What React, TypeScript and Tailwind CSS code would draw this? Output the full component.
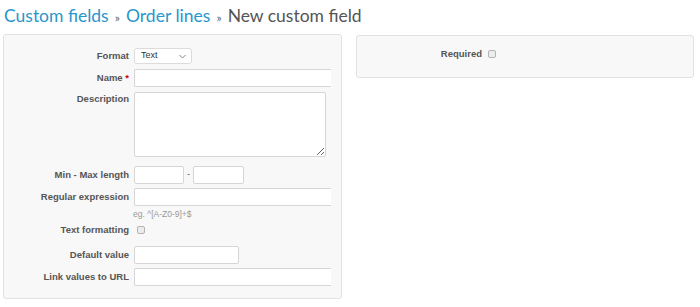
import React from "react";

const labelCls =
  "w-[130px] shrink-0 pr-[5px] text-right text-[9.5px] font-bold text-[#555]";
const inputCls =
  "h-[18px] bg-white border border-[#d6d6d6] rounded-[2px] outline-none";

const Check = () => (
  <span className="inline-block w-[8px] h-[8px] border border-[#b4b4b4] bg-[#ececec] rounded-[2px]" />
);

export default function App() {
  return (
    <div className="w-[700px] h-[307px] bg-white pl-[3px] pr-[6px] font-['Liberation_Sans',Arial,sans-serif] overflow-hidden">
      {/* breadcrumb title */}
      <h2 className="pl-[1px] pt-[5px] h-[34px] text-[17.5px] leading-[22px] text-[#555] font-['Lato',sans-serif] whitespace-nowrap">
        <span className="text-[#2996cc]">Custom fields</span>
        <span className="mx-[3px] text-[12px] text-[#666]"> » </span>
        <span className="text-[#2996cc]">Order lines</span>
        <span className="mx-[3px] text-[12px] text-[#666]"> » </span>
        New custom field
      </h2>

      <div className="grid grid-cols-[339px_338px] gap-[14px] items-start">
        {/* Left box */}
        <div className="h-[265px] bg-[#f8f8f8] border border-[#e2e2e2] rounded-[3px] overflow-hidden">
          <div className="flex mt-[13px]">
            <label className={labelCls + " leading-[16px]"}>Format</label>
            <div className="w-[58px] h-[16px] bg-white border border-[#dcdcdc] rounded-[3px] flex items-center justify-between pl-[6px] pr-[5px]">
              <span className="text-[9px] text-[#333]">Text</span>
              <svg width="7" height="5" viewBox="0 0 7 5" fill="none" stroke="#888" strokeWidth="1">
                <path d="M0.5 1l3 3 3-3" />
              </svg>
            </div>
          </div>

          <div className="flex mt-[5px]">
            <label className={labelCls + " leading-[18px]"}>
              Name <span className="text-[#c00]">*</span>
            </label>
            <input readOnly className={inputCls + " w-[197px] border-r-0 rounded-r-none"} />
          </div>

          <div className="flex mt-[5px]">
            <label className={labelCls + " leading-[14px]"}>Description</label>
            <textarea readOnly className="w-[192px] h-[65px] bg-white border border-[#d6d6d6] rounded-[2px] outline-none resize" />
          </div>

          <div className="flex mt-[9px] items-center">
            <label className={labelCls + " leading-[18px]"}>Min - Max length</label>
            <input readOnly className={inputCls + " w-[50px]"} />
            <span className="w-[9px] text-center text-[9px] text-[#555]">-</span>
            <input readOnly className={inputCls + " w-[51px]"} />
          </div>

          <div className="flex mt-[4px]">
            <label className={labelCls + " leading-[18px]"}>Regular expression</label>
            <input readOnly className={inputCls + " w-[197px] border-r-0 rounded-r-none"} />
          </div>
          <div className="pl-[129px] mt-[3px] text-[8.5px] leading-[10px] text-[#999]">
            eg. ^[A-Z0-9]+$
          </div>

          <div className="flex mt-[3px] items-center h-[16px]">
            <label className={labelCls + " leading-[16px]"}>Text formatting</label>
            <span className="pl-[3px] flex items-center">
              <Check />
            </span>
          </div>

          <div className="flex mt-[8px]">
            <label className={labelCls + " leading-[18px]"}>Default value</label>
            <input readOnly className={inputCls + " w-[105px]"} />
          </div>

          <div className="flex mt-[4px]">
            <label className={labelCls + " leading-[18px]"}>Link values to URL</label>
            <input readOnly className={inputCls + " w-[197px] border-r-0 rounded-r-none"} />
          </div>
        </div>

        {/* Right box */}
        <div className="h-[43px] mt-[1px] bg-[#f8f8f8] border border-[#e2e2e2] rounded-[3px]">
          <div className="flex items-center mt-[10px]">
            <label className={labelCls + " leading-[16px]"}>Required</label>
            <span className="pl-[1px] flex items-center">
              <Check />
            </span>
          </div>
        </div>
      </div>
    </div>
  );
}
